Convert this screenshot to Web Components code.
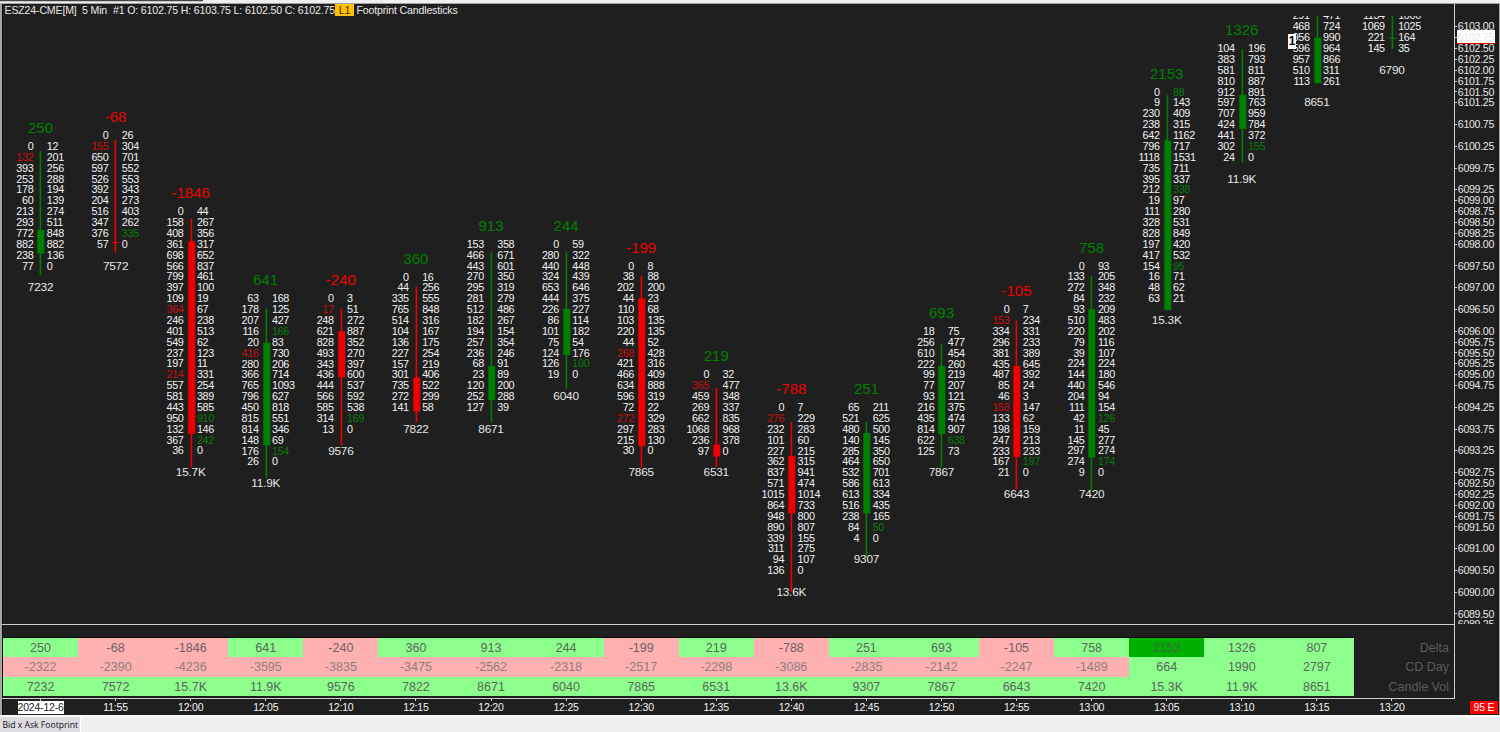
<!DOCTYPE html>
<html lang="en">
<head>
<meta charset="utf-8">
<title>ESZ24-CME Footprint</title>
<style>
    html, body{
        margin: 0;
        height: 100%;
        overflow: hidden;
        background: #f0f0f0;
        font-family: "Liberation Sans", Arial, sans-serif;
    }
</style>
</head>
<body>
<chart-window>
    <chart-header slot="header"></chart-header>
    <footprint-plot slot="plot"></footprint-plot>
    <price-scale slot="scale"></price-scale>
    <study-table slot="study"></study-table>
    <time-scale slot="time"></time-scale>
    <span slot="tab">Bid x Ask Footprint</span>
</chart-window>

<script>
// height of one price level and width of one bar
const TICK = 10.88
const BAR = 75.08
const PLOT_TOP = 16
const FIRST_TICK = 26.7

// level: ticks below 6103.00, stem: [high, body top, body bottom, low]
// "r" marks a bid imbalance, "g" an ask imbalance
const BARS = [
    {time: '2024-12-6', delta: '250', day: '-2322', vol: '7232', up: true, level: 11, stem: [151, 230, 253.6, 275],
        bids: '0 132r 393 253 178 60 213 293 772 882 238 77',
        asks: '12 201 256 288 194 139 274 511 848 882 136 0'},
    {time: '11:55', delta: '-68', day: '-2390', vol: '7572', up: false, level: 10, stem: [140, 242, 243, 252.6],
        bids: '0 155r 650 597 526 392 204 516 347 376 57',
        asks: '26 304 701 552 553 343 273 403 262 335g 0'},
    {time: '12:00', delta: '-1846', day: '-4236', vol: '15.7K', up: false, level: 17, stem: [219, 241.6, 434, 467.6],
        bids: '0 158 408 361 698 566 799 397 109 364r 246 401 549 237 197 214r 557 581 443 950 132 367 36',
        asks: '44 267 356 317 652 837 461 100 19 67 238 513 62 123 11 331 254 389 585 910g 146 242g 0'},
    {time: '12:05', delta: '641', day: '-3595', vol: '11.9K', up: true, level: 25, stem: [309, 343, 445.6, 478],
        bids: '63 178 207 116 20 416r 280 366 765 796 450 815 814 148 176 26',
        asks: '168 125 427 166g 83 730 206 714 1093 627 818 551 346 69 154g 0'},
    {time: '12:10', delta: '-240', day: '-3835', vol: '9576', up: false, level: 25, stem: [309, 331.6, 377.4, 445.4],
        bids: '0 17r 248 621 828 493 343 436 444 566 585 314 13',
        asks: '3 51 272 887 352 270 397 600 537 592 538 169g 0'},
    {time: '12:15', delta: '360', day: '-3475', vol: '7822', up: false, level: 23, stem: [286, 377, 411, 422],
        bids: '0 44 335 765 514 104 136 227 157 301 735 272 141',
        asks: '16 256 555 848 316 167 175 254 219 406 522 299 58'},
    {time: '12:20', delta: '913', day: '-2562', vol: '8671', up: true, level: 20, stem: [252.4, 366, 400, 422],
        bids: '153 466 443 270 295 281 512 182 194 257 236 68 23 120 252 127',
        asks: '358 671 601 350 319 279 486 267 154 354 246 91 89 200 288 39'},
    {time: '12:25', delta: '244', day: '-2318', vol: '6040', up: true, level: 20, stem: [252.4, 308.6, 354.8, 388.6],
        bids: '0 280 440 324 653 444 226 86 101 75 124 126 19',
        asks: '59 322 448 439 646 375 227 114 182 54 176 100g 0'},
    {time: '12:30', delta: '-199', day: '-2517', vol: '7865', up: false, level: 22, stem: [275.4, 298, 445.6, 467.4],
        bids: '0 38 202 44 110 103 220 44 268r 421 466 634 596 72 272r 297 215 30',
        asks: '8 88 200 23 68 135 135 52 428 316 409 888 319 22 329 283 130 0'},
    {time: '12:35', delta: '219', day: '-2298', vol: '6531', up: false, level: 32, stem: [388.6, 445, 457, 467.4],
        bids: '0 365r 459 269 662 1068 236 97',
        asks: '32 477 348 337 835 968 378 0'},
    {time: '12:40', delta: '-788', day: '-3086', vol: '13.6K', up: false, level: 35, stem: [422, 456, 513.4, 592],
        bids: '0 276r 232 101 227 362 837 571 1015 864 948 890 339 311 94 136',
        asks: '7 229 283 60 215 315 941 474 1014 733 800 807 155 275 107 0'},
    {time: '12:45', delta: '251', day: '-2835', vol: '9307', up: true, level: 35, stem: [422, 433, 513.4, 558],
        bids: '65 521 480 140 285 464 532 586 613 516 238 84 4',
        asks: '211 625 500 145 350 650 701 613 334 435 165 50g 0'},
    {time: '12:50', delta: '693', day: '-2142', vol: '7867', up: true, level: 28, stem: [343.4, 366, 434, 467.4],
        bids: '18 256 610 222 99 77 93 216 435 814 622 125',
        asks: '75 477 454 260 219 207 121 375 474 907 638g 73'},
    {time: '12:55', delta: '-105', day: '-2247', vol: '6643', up: false, level: 26, stem: [320.4, 366, 457, 490],
        bids: '0 153r 334 296 381 435 487 85 46 158r 133 198 247 233 167 21',
        asks: '7 234 331 233 389 645 392 24 3 147 62 159 213 233 197g 0'},
    {time: '13:00', delta: '758', day: '-1489', vol: '7420', up: true, level: 22, stem: [275.4, 308.8, 457, 490],
        bids: '0 133 272 84 93 510 220 79 39 224 144 440 204 111 42 11 145 297 274 9',
        asks: '93 205 348 232 209 483 202 116 107 224 180 546 94 154 126g 45 277 274 174g 0'},
    {time: '13:05', delta: '2153', day: '664', vol: '15.3K', up: true, level: 6, stem: [94.8, 140, 309.6, 309.6],
        bids: '0 9 230 238 642 796 1118 735 395 212 19 111 328 828 197 417 154 16 48 63',
        asks: '88g 143 409 315 1162 717 1531 711 337 338g 97 280 531 849 420 532 95g 71 62 21'},
    {time: '13:10', delta: '1326', day: '1990', vol: '11.9K', up: true, level: 2, stem: [49.4, 94.8, 129, 162.6],
        bids: '104 383 581 810 912 597 707 424 441 302 24',
        asks: '196 793 811 887 891 763 959 784 372 155g 0'},
    {time: '13:15', delta: '807', day: '2797', vol: '8651', up: true, level: -1, stem: [14, 38, 83.6, 83.6], cut: true,
        bids: '291 468 956 596 957 510 113',
        asks: '471 724 990 964 866 311 261'},
    {time: '13:20', vol: '6790', up: true, level: -1, stem: [14, 38, 39, 49.4], cut: true, live: true,
        bids: '1134 1069 221 145',
        asks: '1000 1025 164 35'},
]

class ChartWindow extends HTMLElement{
    static get styles(){
        return `
            :host{
                display: grid;
                grid-template-rows: 3px 712px 17px;
                width: 1500px;
                height: 732px;
            }
            .strip{
                display: flex;
                background: #f0eef1;
            }
            .strip i{
                width: 203px;
                height: 1px;
                background: #474247;
                border-bottom: 1px solid #c9c6ca;
            }
            .frame{
                box-sizing: border-box;
                display: grid;
                grid-template-columns: 1452px 1fr;
                grid-template-rows: 12px 609px 74px 1fr;
                background: #1f1f1f;
                border: solid #a5a5a5;
                border-width: 1px 1px 0 2px;
                box-shadow: inset 1px 0 #0c0c0c;
            }
            .header{ grid-area: 1 / 1 / 2 / 2; }
            .plot{ grid-area: 2 / 1 / 3 / 2; border-bottom: 1px solid #cfcfcf; }
            .scale{
                grid-area: 1 / 2 / 4 / 3;
                border-left: 1px solid #cfcfcf;
            }
            .study{ grid-area: 3 / 1 / 4 / 2; border-bottom: 1px solid #cfcfcf; }
            .time{ grid-area: 4 / 1 / 5 / 3; }
            .header, .plot, .scale, .study, .time{ min-width: 0; min-height: 0; }
            footer{
                display: flex;
                border-top: 2px solid #fbfbfb;
                background: #f0f0f0;
            }
            .tab{
                box-sizing: border-box;
                width: 81px;
                height: 15px;
                padding-left: 2.5px;
                background: #dfdbe3;
                border-right: 1px solid #fff;
                color: #101014;
                font: 8.65px/16px "Open Sans", "Noto Sans", sans-serif;
                white-space: nowrap;
            }
        `
    }
    constructor(){
        super()
        this.attachShadow({mode: 'open'})
    }
    connectedCallback(){
        this.shadowRoot.innerHTML = `
            <style>${ChartWindow.styles}</style>
            <div class="strip"><i></i></div>
            <div class="frame">
                <div class="header"><slot name="header"></slot></div>
                <div class="plot"><slot name="plot"></slot></div>
                <div class="scale"><slot name="scale"></slot></div>
                <div class="study"><slot name="study"></slot></div>
                <div class="time"><slot name="time"></slot></div>
            </div>
            <footer><div class="tab"><slot name="tab"></slot></div></footer>
        `
    }
}

class ChartHeader extends HTMLElement{
    static get styles(){
        return `
            :host{
                display: flex;
                height: 12px;
                padding-left: 2.5px;
                color: #e8e8e8;
                font-size: 10.6px;
                letter-spacing: -.17px;
                line-height: 13px;
                white-space: pre;
            }
            .symbol{ width: 77.5px; }
            .period{ width: 31px; }
            .ohlc{ width: 222px; }
            .badge{
                width: 19px;
                margin-right: 2.5px;
                background: #ffc000;
                color: #3c3000;
                text-align: center;
            }
        `
    }
    constructor(){
        super()
        this.attachShadow({mode: 'open'})
    }
    connectedCallback(){
        this.shadowRoot.innerHTML = `
            <style>${ChartHeader.styles}</style>
            <span class="symbol">ESZ24-CME[M]</span>
            <span class="period">5 Min</span>
            <span class="ohlc">#1 O: 6102.75 H: 6103.75 L: 6102.50 C: 6102.75</span>
            <span class="badge">L1</span>
            <span class="name">Footprint Candlesticks</span>
        `
    }
}

class FootCandle extends HTMLElement{
    static get styles(){
        return `
            :host{
                flex: 0 0 ${BAR}px;
                display: block;
                --up: #008000;
                --down: #f00000;
            }
            .delta{
                height: 24px;
                font-size: 15px;
                line-height: 22.4px;
                text-align: center;
            }
            .ladder{
                display: grid;
                grid-template-columns: 30.4px 13px 1fr;
                color: #f2f2f2;
                font-size: 10.8px;
                letter-spacing: -.33px;
                line-height: ${TICK}px;
            }
            .ladder span{ display: block; height: ${TICK}px; }
            .bids{ display: flex; flex-direction: column; align-items: flex-end; }
            .asks{ padding-left: .4px; }
            .r{ color: #c80d0d; }
            .g{ color: #087c08; }
            svg{ display: block; width: 13px; height: 1px; overflow: visible; }
            .vol{
                margin-top: ${TICK}px;
                height: ${TICK}px;
                color: #e6e6e6;
                font-size: 11.8px;
                letter-spacing: -.2px;
                line-height: ${TICK}px;
                text-align: center;
            }
            .up{ color: var(--up); fill: var(--up); }
            .down{ color: var(--down); fill: var(--down); }
        `
    }
    constructor(){
        super()
        this.attachShadow({mode: 'open'})
    }
    connectedCallback(){
        this.style.marginTop = `${FIRST_TICK - PLOT_TOP - TICK / 2 + TICK * this.bar.level - 24}px`
        this.render()
    }
    cells(list){
        return list.split(' ').map(n => `<span class="${n.replace(/\d/g, '')}">${parseInt(n)}</span>`).join('')
    }
    render(){
        const {delta, vol, up, level, stem, cut, bids, asks} = this.bar
        const top = FIRST_TICK - TICK / 2 + TICK * level
        const [high, open, close, low] = stem.map(y => y - top)
        this.shadowRoot.innerHTML = `
            <style>${FootCandle.styles}</style>
            <div class="delta ${delta < 0 ? 'down' : 'up'}">${cut ? '' : delta}</div>
            <div class="ladder">
                <div class="bids">${this.cells(bids)}</div>
                <svg class="${up ? 'up' : 'down'}">
                    <rect x="6.6" y="${high}" width="1.6" height="${low - high}"/>
                    <rect x="4.3" y="${open}" width="7" height="${close - open}"/>
                </svg>
                <div class="asks">${this.cells(asks)}</div>
            </div>
            <div class="vol">${vol}</div>
        `
    }
}

class FootprintPlot extends HTMLElement{
    static get styles(){
        return `
            :host{
                position: relative;
                display: flex;
                align-items: flex-start;
                height: 608px;
                padding-left: 1px;
                overflow: hidden;
            }
            .marker{
                position: absolute;
                left: 1286px;
                top: 18px;
                width: 8px;
                height: 15px;
                background: #fff;
                color: #000;
                font: bold 12px/15px "Liberation Sans", Arial, sans-serif;
                text-align: center;
            }
        `
    }
    constructor(){
        super()
        this.attachShadow({mode: 'open'})
    }
    connectedCallback(){
        this.shadowRoot.innerHTML = `
            <style>${FootprintPlot.styles}</style>
            <div class="marker">1</div>
        `
        this.$marker = this.shadowRoot.querySelector('.marker')
        BARS.forEach(bar => {
            const $candle = document.createElement('foot-candle')
            $candle.bar = bar
            this.$marker.before($candle)
        })
    }
}

class PriceScale extends HTMLElement{
    // ticks that carry a label, counted down from 6103.00
    #levels = [0, 1, 2, 3, 4, 5, 6, 7, 9, 11, 13, 15, 16, 17, 18, 19, 20, 22, 24, 26, 28, 29, 30, 31, 32,
        33, 35, 37, 39, 41, 42, 43, 44, 45, 46, 48, 50, 52, 54, 55]
    static get styles(){
        return `
            :host{
                display: block;
                box-sizing: border-box;
                height: 620px;
                padding-top: ${FIRST_TICK - 4 - TICK / 2}px;
                overflow: hidden;
                color: #e6e6e6;
                font-size: 10.6px;
                letter-spacing: -.3px;
            }
            .row{
                display: flex;
                align-items: center;
                height: ${TICK}px;
                line-height: ${TICK}px;
            }
            .row::before{
                content: "";
                width: 2px;
                height: 1px;
                margin-right: .8px;
                background: #cfcfcf;
            }
            .gap::before{ background: none; }
            .last{ position: relative; }
            .last span{
                margin: -1px 0 0 -.8px;
                padding: 0 0 0 .8px;
                width: 37px;
                height: 13px;
                line-height: 14px;
                background: #fff;
                border-bottom: 1px solid #e00000;
                color: #e9e6e6;
            }
        `
    }
    constructor(){
        super()
        this.attachShadow({mode: 'open'})
    }
    connectedCallback(){
        const rows = Array.from({length: 56}, (_, i) => {
            if(!this.#levels.includes(i)) return '<div class="row gap"></div>'
            const price = (6103 - i * .25).toFixed(2)
            return `<div class="row ${i === 1 ? 'last' : ''}"><span>${price}</span></div>`
        })
        this.shadowRoot.innerHTML = `<style>${PriceScale.styles}</style>${rows.join('')}`
    }
}

class StudyTable extends HTMLElement{
    static get styles(){
        return `
            :host{
                display: flex;
                justify-content: space-between;
                padding: 12.6px 5px 0 1px;
                font-size: 12.5px;
                line-height: 21px;
            }
            .grid, .names{
                display: grid;
                grid-auto-rows: 19.5px;
            }
            .grid{
                grid-template-columns: repeat(18, ${BAR}px);
                box-shadow: 1px -1px #060606;
                text-align: center;
            }
            .grid div{ height: 19.5px; }
            .pos{ background: #8cff8c; color: #5c665c; }
            .neg{ background: #ffb0b0; color: #6e6262; }
            .day.neg{ color: #8c8080; }
            .max{ background: #00b000; color: #3f6b3f; }
            .names{ color: #5c5c5c; text-align: right; }
        `
    }
    constructor(){
        super()
        this.attachShadow({mode: 'open'})
    }
    connectedCallback(){
        const done = BARS.filter(bar => !bar.live)
        const row = key => done.map(bar => {
            let tone = parseFloat(bar[key]) < 0 ? 'neg' : 'pos'
            if(key === 'delta' && bar.delta > 2000) tone = 'max'
            return `<div class="${key} ${tone}">${bar[key]}</div>`
        }).join('')
        this.shadowRoot.innerHTML = `
            <style>${StudyTable.styles}</style>
            <div class="grid">${row('delta')}${row('day')}${row('vol')}</div>
            <div class="names">
                <div>Delta</div>
                <div>CD Day</div>
                <div>Candle Vol</div>
            </div>
        `
    }
}

class TimeScale extends HTMLElement{
    static get styles(){
        return `
            :host{
                display: flex;
                height: 16px;
                padding-left: 1px;
                color: #f4f4f4;
                font-size: 10.5px;
                letter-spacing: -.2px;
                line-height: 13px;
            }
            .time{
                flex: 0 0 ${BAR}px;
                display: flex;
                flex-direction: column;
                align-items: center;
            }
            .time::before{
                content: "";
                width: 1px;
                height: 2px;
                background: #cfcfcf;
            }
            .date span{
                width: 46px;
                background: #fff;
                color: #222;
                text-align: center;
                white-space: nowrap;
            }
            .feed{
                width: 28px;
                height: 13px;
                margin: 2px 1px 0 auto;
                background: #f00;
                color: #fff;
                text-align: center;
            }
        `
    }
    constructor(){
        super()
        this.attachShadow({mode: 'open'})
    }
    connectedCallback(){
        const times = BARS.map((bar, i) => `<div class="time ${i ? '' : 'date'}"><span>${bar.time}</span></div>`)
        this.shadowRoot.innerHTML = `
            <style>${TimeScale.styles}</style>
            ${times.join('')}
            <div class="feed">95 E</div>
        `
    }
}

customElements.define('foot-candle', FootCandle)
customElements.define('footprint-plot', FootprintPlot)
customElements.define('chart-header', ChartHeader)
customElements.define('price-scale', PriceScale)
customElements.define('study-table', StudyTable)
customElements.define('time-scale', TimeScale)
customElements.define('chart-window', ChartWindow)
</script>
</body>
</html>
